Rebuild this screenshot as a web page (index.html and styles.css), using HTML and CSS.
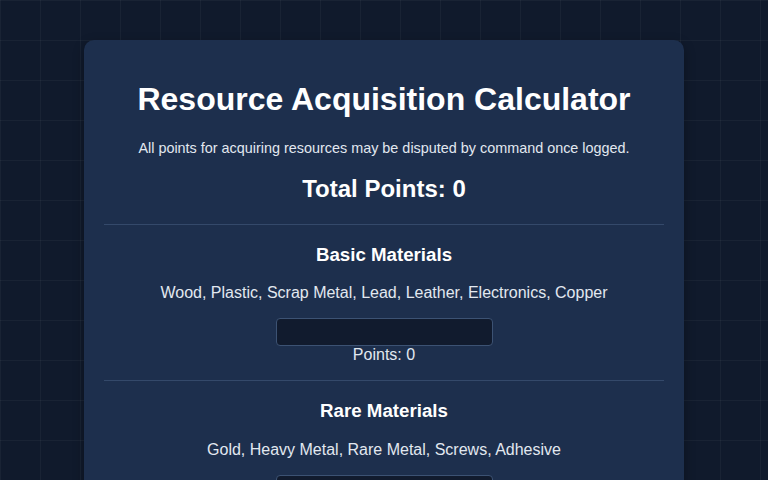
FILE: index.html
```html
<!DOCTYPE html>
<html lang="en">
<head>
    <meta charset="UTF-8">
    <meta name="viewport" content="width=device-width, initial-scale=1.0">
    <link rel="stylesheet" href="styles.css">
</head>
<body>

<div class="calculator">
    <h1>Resource Acquisition Calculator</h1>
    <p class="note">All points for acquiring resources may be disputed by command once logged.</p>
    <h2 id="total">Total Points: 0</h2>

    <div class="category">
        <h3>Basic Materials</h3>
        <p>Wood, Plastic, Scrap Metal, Lead, Leather, Electronics, Copper</p>
        <input type="number" id="basic">
        <div class="points">Points: 0</div>
    </div>

    <div class="category">
        <h3>Rare Materials</h3>
        <p>Gold, Heavy Metal, Rare Metal, Screws, Adhesive</p>
        <input type="number" id="rare">
        <div class="points">Points: 0</div>
    </div>

    <div class="category">
        <h3>Special Materials</h3>
        <p>Crystals, Fuel, Circuits</p>
        <input type="number" id="special">
        <div class="points">Points: 0</div>
    </div>
</div>

</body>
</html>
```

FILE: styles.css
```css
body {
    font-family: 'Liberation Sans', Arial, sans-serif;
    margin: 0;
    padding: 40px 0;
    background-color: #101a2c;
    background-image:
        linear-gradient(rgba(255, 255, 255, 0.04) 1px, transparent 1px),
        linear-gradient(90deg, rgba(255, 255, 255, 0.04) 1px, transparent 1px);
    background-size: 40px 40px;
    color: #e2e8f0;
}

.calculator {
    background: #1d2f4d;
    width: 600px;
    box-sizing: border-box;
    margin: 0 auto;
    padding: 20px;
    border-radius: 10px;
    box-shadow: 0 4px 12px rgba(0, 0, 0, 0.3);
    text-align: center;
}

.calculator h1 {
    font-size: 32px;
    color: #ffffff;
    margin: 21px 0;
}

.note {
    font-size: 14.4px;
    margin: 22px 0 19px;
}

.calculator h2 {
    font-size: 24px;
    color: #ffffff;
    margin: 19px 0 21px;
}

.category {
    border-top: 1px solid #34496a;
}

.category h3 {
    font-size: 18.7px;
    color: #ffffff;
    margin: 18.7px 0;
}

.category p {
    font-size: 16px;
    margin: 16px 0;
}

.category input {
    display: block;
    width: 217px;
    height: 28px;
    box-sizing: border-box;
    margin: 0 auto;
    background-color: #111b2e;
    border: 1px solid #3c5273;
    border-radius: 4px;
    color: #e2e8f0;
}

.points {
    font-size: 16px;
    margin-bottom: 16px;
}
```
